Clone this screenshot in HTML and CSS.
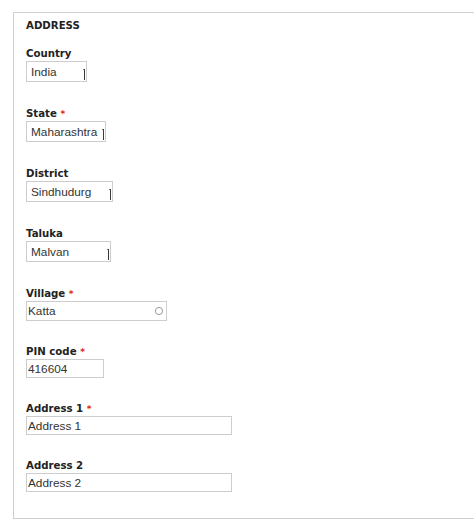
FILE: index.html
```html
<!DOCTYPE html>
<html>
<head>
<meta charset="utf-8">
<link rel="stylesheet" href="styles.css">
</head>
<body>
<div class="panel">
  <div class="legend">ADDRESS</div>

  <div class="field field-select">
    <label class="label">Country</label>
    <span class="select-wrap w-country"><select class="select"><option>India</option></select></span>
  </div>

  <div class="field field-select">
    <label class="label">State <span class="req">*</span></label>
    <span class="select-wrap w-state"><select class="select"><option>Maharashtra</option></select></span>
  </div>

  <div class="field field-select">
    <label class="label">District</label>
    <span class="select-wrap w-district"><select class="select"><option>Sindhudurg</option></select></span>
  </div>

  <div class="field field-select">
    <label class="label">Taluka</label>
    <span class="select-wrap w-taluka"><select class="select"><option>Malvan</option></select></span>
  </div>

  <div class="field">
    <label class="label">Village <span class="req">*</span></label>
    <span class="input-wrap w-village">
      <input class="input" type="text" value="Katta">
      <svg class="throbber" width="10" height="10" viewBox="0 0 10 10"><circle cx="5" cy="5" r="3.6" fill="none" stroke="#9a9a9a" stroke-width="1"/></svg>
    </span>
  </div>

  <div class="field">
    <label class="label">PIN code <span class="req">*</span></label>
    <input class="input w-pin" type="text" value="416604">
  </div>

  <div class="field">
    <label class="label">Address 1 <span class="req">*</span></label>
    <input class="input w-address" type="text" value="Address 1">
  </div>

  <div class="field">
    <label class="label">Address 2</label>
    <input class="input w-address" type="text" value="Address 2">
  </div>
</div>
</body>
</html>
```

FILE: styles.css
```css
html, body {
  margin: 0;
  padding: 0;
  background: #fff;
}

body {
  overflow: hidden;
  font-family: "DejaVu Sans", sans-serif;
  color: #333;
}

.panel {
  margin: 12px 0 0 13px;
  border: 1px solid #cfcfcf;
  border-right: none;
  padding: 6px 0 3px 12px;
  display: flex;
  flex-direction: column;
  align-items: flex-start;
}

.legend {
  height: 14px;
  font-size: 10.2px;
  font-weight: bold;
  line-height: 14px;
  margin-bottom: 13px;
  color: #222;
}

.field {
  display: flex;
  flex-direction: column;
  align-items: flex-start;
  margin-bottom: 23px;
}

.field-select {
  margin-bottom: 24px;
}

.label {
  display: block;
  height: 15px;
  flex: none;
  font-size: 10.2px;
  font-weight: bold;
  line-height: 15px;
  color: #222;
}

.req {
  color: #e0202a;
  font-size: 9px;
  line-height: 0;
}

.select-wrap {
  position: relative;
  display: block;
  height: 21px;
  flex: none;
}

.select-wrap::after {
  content: "";
  position: absolute;
  right: 2px;
  top: 8px;
  height: 11px;
  width: 1px;
  background: #3a3a3a;
}

.select-wrap::before {
  content: "";
  position: absolute;
  right: 2px;
  top: 8px;
  width: 2px;
  height: 1px;
  background: #777;
}

.select {
  -webkit-appearance: none;
  appearance: none;
  box-sizing: border-box;
  display: block;
  width: 100%;
  height: 21px;
  margin: 0;
  border: 1px solid #cdcdcd;
  border-radius: 0;
  background: #fff;
  padding: 0 0 0 4px;
  font-family: "Liberation Sans", Arial, sans-serif;
  font-size: 11.8px;
  color: #333;
  outline: none;
}

.w-country { width: 61px; }
.w-state { width: 80px; }
.w-district { width: 87px; }
.w-taluka { width: 85px; }

.input-wrap {
  position: relative;
  display: block;
  flex: none;
}

.input {
  box-sizing: border-box;
  display: block;
  flex: none;
  height: 19px;
  margin: 0;
  border: 1px solid #cdcdcd;
  border-radius: 0;
  background: #fff;
  padding: 0 0 0 1px;
  font-family: "Liberation Sans", Arial, sans-serif;
  font-size: 11.8px;
  color: #333;
  outline: none;
}

.w-village { width: 141px; }
.w-village .input { width: 141px; height: 20px; }
.w-pin { width: 78px; }
.w-address { width: 206px; }

.throbber {
  position: absolute;
  right: 3px;
  top: 5px;
}
```
